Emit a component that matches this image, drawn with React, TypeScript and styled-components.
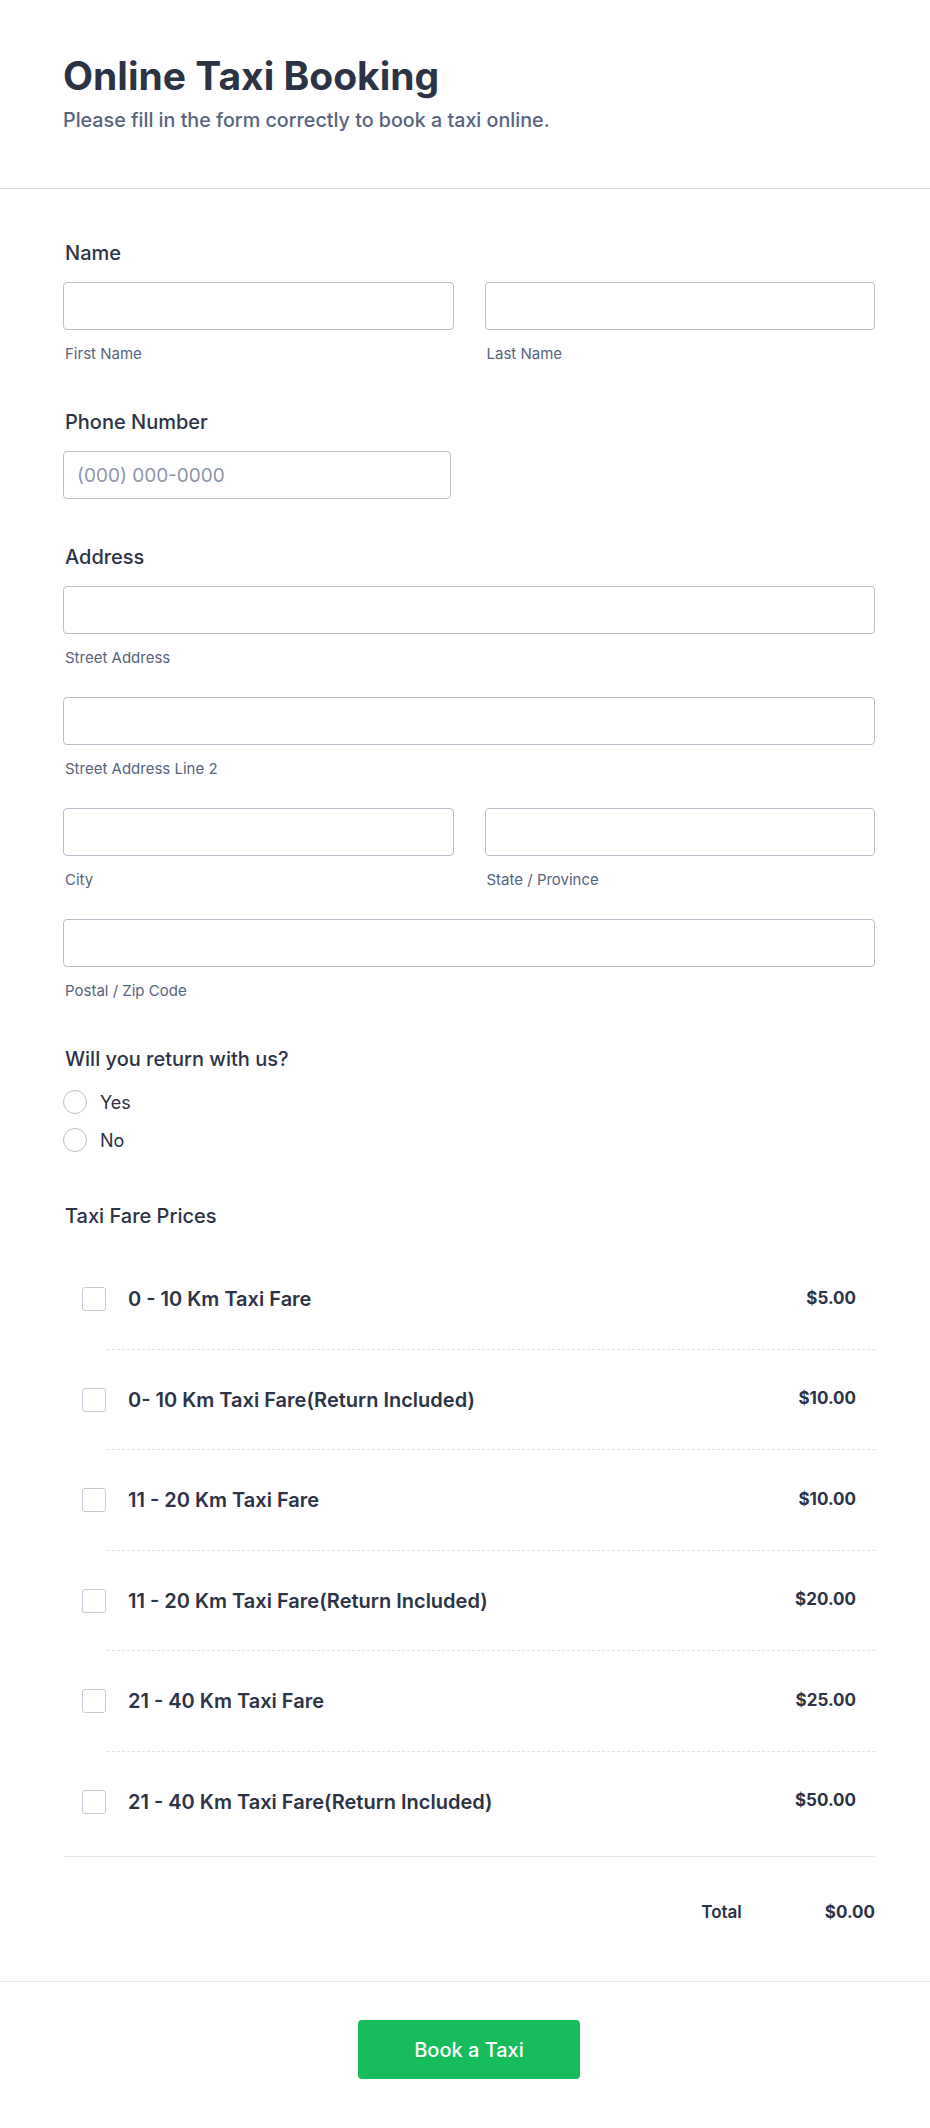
import React from 'react';
import styled, { createGlobalStyle } from 'styled-components';

const GlobalStyle = createGlobalStyle`
  body {
    margin: 0;
    background: #ffffff;
    font-family: 'Inter', 'Noto Sans', sans-serif;
    color: #2c3345;
  }
  * { box-sizing: border-box; }
`;

const Page = styled.div`
  width: 930px;
  min-height: 2128px;
  background: #ffffff;
`;

const Header = styled.header`
  padding: 53px 55px 54px 63px;
  border-bottom: 1px solid #dcdfe6;
`;

const Title = styled.h1`
  margin: 0;
  font-size: 39px;
  line-height: 46px;
  font-weight: 700;
  color: #2c3345;
`;

const Subtitle = styled.p`
  margin: 8px 0 0;
  font-size: 19.7px;
  line-height: 27px;
  font-weight: 500;
  color: #57647e;
`;

const Body = styled.div`
  padding: 28px 55px 0 63px;
`;

const Field = styled.div<{ $noBottom?: boolean }>`
  padding: 22px 0 ${(p) => (p.$noBottom ? '0' : '22px')};
`;

const Label = styled.div<{ $top?: number }>`
  font-size: 20px;
  line-height: 28px;
  font-weight: 500;
  color: #2c3345;
  padding-left: 2px;
  margin-top: ${(p) => p.$top || 0}px;
  margin-bottom: 15px;
`;

const Row = styled.div`
  display: grid;
  grid-template-columns: 1fr 1fr;
  column-gap: 31px;
`;

const InputWrap = styled.div<{ $gap?: boolean }>`
  margin-bottom: ${(p) => (p.$gap ? '29px' : '0')};
`;

const TextInput = styled.input<{ $width?: string }>`
  display: block;
  width: ${(p) => p.$width || '100%'};
  height: 48px;
  border: 1px solid #b8bdc9;
  border-radius: 4px;
  padding: 0 13px;
  font-family: 'Inter', sans-serif;
  font-size: 19px;
  color: #2c3345;
  background: #fff;
  &::placeholder {
    color: #8d95a7;
  }
`;

const SubLabel = styled.div`
  margin-top: 14px;
  font-size: 15px;
  line-height: 20px;
  color: #57647e;
  padding-left: 2px;
`;

const RadioList = styled.div`
  display: flex;
  flex-direction: column;
  gap: 10px;
`;

const RadioRow = styled.label`
  display: flex;
  align-items: center;
  gap: 13px;
  height: 28px;
  font-size: 18px;
  color: #2c3345;
`;

const RadioCircle = styled.span`
  width: 24px;
  height: 24px;
  border-radius: 50%;
  border: 1px solid #b8bdc9;
  background: #fff;
`;

const FareList = styled.div`
  margin-top: 19px;
  padding-bottom: 4px;
  border-bottom: 1px solid #e3e6ed;
`;

const FareItem = styled.div<{ $last?: boolean }>`
  position: relative;
  display: flex;
  align-items: center;
  height: 100.5px;
  padding: 0 19px;
  &::after {
    content: '';
    position: absolute;
    left: 44px;
    right: 0;
    bottom: 0;
    border-bottom: ${(p) => (p.$last ? '0' : '1px dashed #dfe2ea')};
  }
`;

const CheckBox = styled.span`
  width: 24px;
  height: 24px;
  border: 1px solid #c3cad8;
  border-radius: 3px;
  flex-shrink: 0;
  background: #fff;
`;

const FareName = styled.span`
  margin-left: 22px;
  font-size: 20px;
  font-weight: 600;
  color: #2c3345;
  flex: 1;
`;

const Price = styled.span`
  font-size: 17px;
  font-weight: 700;
  color: #2c3345;
  margin-top: -3px;
`;

const TotalRow = styled.div`
  display: flex;
  justify-content: flex-end;
  align-items: center;
  gap: 83px;
  height: 112px;
  font-size: 17px;
  font-weight: 600;
  padding-bottom: 2px;
`;

const TotalValue = styled.span`
  font-weight: 700;
`;

const Footer = styled.div`
  margin-top: 12px;
  border-top: 1px solid #e3e6ed;
  padding: 38px 55px 50px 63px;
  display: flex;
  justify-content: center;
`;

const SubmitButton = styled.button`
  width: 222px;
  height: 59px;
  border: 0;
  border-radius: 4px;
  background: #18bd5b;
  color: #ffffff;
  font-family: 'Inter', sans-serif;
  font-size: 20px;
  font-weight: 500;
  cursor: pointer;
`;

const fares = [
  { name: '0 - 10 Km Taxi Fare', price: '$5.00' },
  { name: '0- 10 Km Taxi Fare(Return Included)', price: '$10.00' },
  { name: '11 - 20 Km Taxi Fare', price: '$10.00' },
  { name: '11 - 20 Km Taxi Fare(Return Included)', price: '$20.00' },
  { name: '21 - 40 Km Taxi Fare', price: '$25.00' },
  { name: '21 - 40 Km Taxi Fare(Return Included)', price: '$50.00' },
];

function App(): JSX.Element {
  return (
    <Page>
      <GlobalStyle />
      <Header>
        <Title>Online Taxi Booking</Title>
        <Subtitle>Please fill in the form correctly to book a taxi online.</Subtitle>
      </Header>
      <Body>
        <Field>
          <Label>Name</Label>
          <Row>
            <div>
              <TextInput />
              <SubLabel>First Name</SubLabel>
            </div>
            <div>
              <TextInput />
              <SubLabel>Last Name</SubLabel>
            </div>
          </Row>
        </Field>

        <Field>
          <Label>Phone Number</Label>
          <TextInput $width='388px' placeholder='(000) 000-0000' />
        </Field>

        <Field>
          <Label>Address</Label>
          <InputWrap $gap>
            <TextInput />
            <SubLabel>Street Address</SubLabel>
          </InputWrap>
          <InputWrap $gap>
            <TextInput />
            <SubLabel>Street Address Line 2</SubLabel>
          </InputWrap>
          <InputWrap $gap>
            <Row>
              <div>
                <TextInput />
                <SubLabel>City</SubLabel>
              </div>
              <div>
                <TextInput />
                <SubLabel>State / Province</SubLabel>
              </div>
            </Row>
          </InputWrap>
          <InputWrap>
            <TextInput />
            <SubLabel>Postal / Zip Code</SubLabel>
          </InputWrap>
        </Field>

        <Field>
          <Label>Will you return with us?</Label>
          <RadioList>
            <RadioRow>
              <RadioCircle />
              Yes
            </RadioRow>
            <RadioRow>
              <RadioCircle />
              No
            </RadioRow>
          </RadioList>
        </Field>

        <Field $noBottom>
          <Label $top={4}>Taxi Fare Prices</Label>
          <FareList>
            {fares.map((f, i) => (
              <FareItem key={i} $last={i === fares.length - 1}>
                <CheckBox />
                <FareName>{f.name}</FareName>
                <Price>{f.price}</Price>
              </FareItem>
            ))}
          </FareList>
          <TotalRow>
            <span>Total</span>
            <TotalValue>$0.00</TotalValue>
          </TotalRow>
        </Field>
      </Body>
      <Footer>
        <SubmitButton>Book a Taxi</SubmitButton>
      </Footer>
    </Page>
  );
}

export default App;
